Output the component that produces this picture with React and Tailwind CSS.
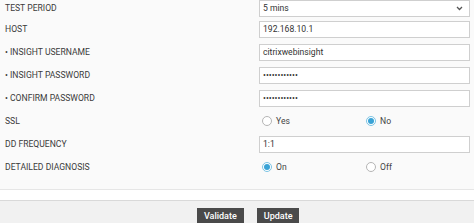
import React from "react";

const Radio = ({ checked, label }) => (
  <label className="flex items-center gap-[4px]">
    <span
      className={
        "flex h-[10px] w-[10px] items-center justify-center rounded-full border bg-white " +
        (checked ? "border-[#7cc4e4]" : "border-[#b5b5b5]")
      }
    >
      {checked && <span className="h-[6px] w-[6px] rounded-full bg-[#3aa3d6]" />}
    </span>
    <span className="text-[#444]">{label}</span>
  </label>
);

const Row = ({ label, children, first }) => (
  <div className={"flex items-center " + (first ? "h-[20px]" : "h-[23px]")}>
    <div className="w-[259px] pl-[5px] text-[#3a3a3a]">{label}</div>
    <div className="flex-1 pr-[4px]">{children}</div>
  </div>
);

const Box = ({ value }) => (
  <div className="flex h-[17px] items-center border border-[#cfcfcf] bg-white pl-[3px] text-[#333]">
    {value}
  </div>
);

export default function App() {
  return (
    <div
      className="h-[223px] overflow-hidden bg-[#fafafa] text-[8.6px]"
      style={{ fontFamily: "Roboto, 'Liberation Sans', sans-serif" }}
    >
      <div className="mt-[-2px]">
        <Row first label="TEST PERIOD">
          <div className="flex h-[17px] items-center justify-between border border-[#cfcfcf] bg-white pl-[3px] pr-[6px] text-[#333]">
            <span>5 mins</span>
            <svg width="7" height="5" viewBox="0 0 7 5">
              <path d="M1 1l2.5 2.5L6 1" fill="none" stroke="#555" strokeWidth="1.3" />
            </svg>
          </div>
        </Row>
        <Row label="HOST">
          <Box value="192.168.10.1" />
        </Row>
        <Row label="• INSIGHT USERNAME">
          <Box value="citrixwebinsight" />
        </Row>
        <Row label="• INSIGHT PASSWORD">
          <Box value="••••••••••••" />
        </Row>
        <Row label="• CONFIRM PASSWORD">
          <Box value="••••••••••••" />
        </Row>
        <Row label="SSL">
          <div className="flex pl-[3px]">
            <div className="w-[104px]">
              <Radio label="Yes" />
            </div>
            <Radio checked label="No" />
          </div>
        </Row>
        <Row label="DD FREQUENCY">
          <Box value="1:1" />
        </Row>
        <Row label="DETAILED DIAGNOSIS">
          <div className="flex pl-[3px]">
            <div className="w-[104px]">
              <Radio checked label="On" />
            </div>
            <Radio label="Off" />
          </div>
        </Row>
      </div>
      <div className="mt-[10px] h-[11px] border-t border-[#e6e6e6] bg-white" />
      <div className="flex h-[40px] gap-[13px] border-t border-[#d9d9d9] bg-[#f1f1f1] pl-[197px] pt-[7px]">
        <button className="h-[18px] bg-[#4a4a4a] px-[7px] text-[9px] font-medium text-white">
          Validate
        </button>
        <button className="h-[18px] bg-[#4a4a4a] px-[7px] text-[9px] font-medium text-white">
          Update
        </button>
      </div>
    </div>
  );
}
